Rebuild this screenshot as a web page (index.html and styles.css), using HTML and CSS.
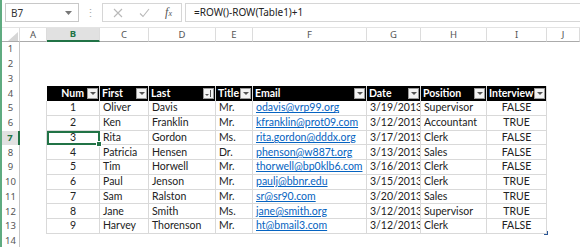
FILE: index.html
```html
<!DOCTYPE html>
<html lang="en">
<head>
    <meta charset="UTF-8">
    <title>Table1 - Excel</title>
    <link rel="stylesheet" href="styles.css">
</head>
<body>
<div class="window">
    <div class="formula-bar">
        <div class="name-box">
            <span>B7</span>
            <svg class="nb-arrow" width="7" height="4" viewBox="0 0 7 4"><polygon points="0,0 7,0 3.5,4" fill="#777"/></svg>
        </div>
        <div class="grip">&#8942;</div>
        <div class="fx-buttons">
            <svg width="10" height="10" viewBox="0 0 10 10"><path d="M1 1 L9 9 M9 1 L1 9" stroke="#b9b9b9" stroke-width="1.1"/></svg>
            <svg width="11" height="10" viewBox="0 0 11 10"><path d="M1 5.5 L4 8.5 L10 1" stroke="#b9b9b9" stroke-width="1.1" fill="none"/></svg>
            <span class="fx">f<small>x</small></span>
        </div>
        <div class="formula">=ROW()-ROW(Table1)+1</div>
    </div>

    <table class="sheet">
        <colgroup>
            <col style="width:18px"><col style="width:27px"><col style="width:53px"><col style="width:49px">
            <col style="width:67px"><col style="width:37px"><col style="width:114px"><col style="width:54px">
            <col style="width:66px"><col style="width:60px"><col style="width:33px">
        </colgroup>
        <thead>
            <tr>
                <th class="corner"><svg width="10" height="9" viewBox="0 0 10 9"><polygon points="10,0 10,9 0,9" fill="#d6d6d6"/></svg></th>
                <th>A</th><th class="sel">B</th><th>C</th><th>D</th><th>E</th><th>F</th><th>G</th><th>H</th><th>I</th><th>J</th>
            </tr>
        </thead>
        <tbody>
            <tr><th>1</th><td colspan="10"></td></tr>
            <tr><th>2</th><td colspan="10"></td></tr>
            <tr><th>3</th><td colspan="10"></td></tr>
            <tr class="hdr">
                <th>4</th><td></td>
                <td class="h"><div class="hd right"><span>Num</span><i class="fb"></i></div></td>
                <td class="h"><div class="hd"><span>First</span><i class="fb"></i></div></td>
                <td class="h"><div class="hd"><span>Last</span><i class="fb sort"></i></div></td>
                <td class="h"><div class="hd"><span>Title</span><i class="fb"></i></div></td>
                <td class="h"><div class="hd"><span>Email</span><i class="fb"></i></div></td>
                <td class="h"><div class="hd"><span>Date</span><i class="fb"></i></div></td>
                <td class="h"><div class="hd"><span>Position</span><i class="fb"></i></div></td>
                <td class="h"><div class="hd"><span>Interview</span><i class="fb"></i></div></td>
                <td></td>
            </tr>
            <tr><th>5</th><td class="edge"></td><td class="t c">1</td><td class="t">Oliver</td><td class="t">Davis</td><td class="t">Mr.</td><td class="t mail">odavis@vrp99.org</td><td class="t r">3/19/2013</td><td class="t">Supervisor</td><td class="t c">FALSE</td><td></td></tr>
            <tr><th>6</th><td class="edge"></td><td class="t c">2</td><td class="t">Ken</td><td class="t">Franklin</td><td class="t">Mr.</td><td class="t mail">kfranklin@prot09.com</td><td class="t r">3/12/2013</td><td class="t">Accountant</td><td class="t c">TRUE</td><td></td></tr>
            <tr><th class="sel">7</th><td class="edge"></td><td class="t c active">3</td><td class="t">Rita</td><td class="t">Gordon</td><td class="t">Ms.</td><td class="t mail">rita.gordon@dddx.org</td><td class="t r">3/17/2013</td><td class="t">Clerk</td><td class="t c">FALSE</td><td></td></tr>
            <tr><th>8</th><td class="edge"></td><td class="t c">4</td><td class="t">Patricia</td><td class="t">Hensen</td><td class="t">Dr.</td><td class="t mail">phenson@w887t.org</td><td class="t r">3/13/2013</td><td class="t">Sales</td><td class="t c">FALSE</td><td></td></tr>
            <tr><th>9</th><td class="edge"></td><td class="t c">5</td><td class="t">Tim</td><td class="t">Horwell</td><td class="t">Mr.</td><td class="t mail">thorwell@bp0klb6.com</td><td class="t r">3/16/2013</td><td class="t">Clerk</td><td class="t c">FALSE</td><td></td></tr>
            <tr><th>10</th><td class="edge"></td><td class="t c">6</td><td class="t">Paul</td><td class="t">Jenson</td><td class="t">Mr.</td><td class="t mail">paulj@bbnr.edu</td><td class="t r">3/15/2013</td><td class="t">Clerk</td><td class="t c">TRUE</td><td></td></tr>
            <tr><th>11</th><td class="edge"></td><td class="t c">7</td><td class="t">Sam</td><td class="t">Ralston</td><td class="t">Mr.</td><td class="t mail">sr@sr90.com</td><td class="t r">3/20/2013</td><td class="t">Sales</td><td class="t c">TRUE</td><td></td></tr>
            <tr><th>12</th><td class="edge"></td><td class="t c">8</td><td class="t">Jane</td><td class="t">Smith</td><td class="t">Ms.</td><td class="t mail">jane@smith.org</td><td class="t r">3/12/2013</td><td class="t">Supervisor</td><td class="t c">TRUE</td><td></td></tr>
            <tr><th>13</th><td class="edge"></td><td class="t c">9</td><td class="t">Harvey</td><td class="t">Thorenson</td><td class="t">Mr.</td><td class="t mail">ht@bmail3.com</td><td class="t r">3/12/2013</td><td class="t">Clerk</td><td class="t c last">FALSE</td><td></td></tr>
            <tr><th>14</th><td colspan="10"></td></tr>
        </tbody>
    </table>
</div>
</body>
</html>
```

FILE: styles.css
```css
body {
    margin: 0;
    font-family: "Lato", "Liberation Sans", sans-serif;
    background: #fff;
    color: #222;
}
.window {
    border-left: 2px solid #5fab80;
    height: 247px;
    overflow: hidden;
}

/* formula bar */
.formula-bar {
    display: flex;
    align-items: flex-start;
    height: 28px;
    padding-top: 3px;
    box-sizing: border-box;
    border-bottom: 1px solid #e3e3e3;
}
.name-box {
    display: flex;
    align-items: center;
    justify-content: space-between;
    width: 74px;
    height: 19px;
    margin-left: 3px;
    padding: 0 6px 0 5px;
    box-sizing: border-box;
    border: 1px solid #c8c8c8;
    font-family: "Noto Sans", sans-serif;
    font-size: 10px;
    color: #333;
}
.grip {
    width: 23px;
    text-align: center;
    color: #aaa;
    font-size: 11px;
    line-height: 19px;
}
.fx-buttons {
    display: flex;
    align-items: center;
    justify-content: space-between;
    width: 80px;
    height: 19px;
    padding: 0 9px 0 10px;
    box-sizing: border-box;
    border: 1px solid #d6d6d6;
}
.fx {
    font-family: "Liberation Serif", serif;
    font-style: italic;
    font-size: 12px;
    color: #555;
}
.fx small {
    font-size: 8px;
}
.formula {
    flex: 1;
    height: 19px;
    margin-left: 3px;
    margin-right: -1px;
    padding-left: 8px;
    box-sizing: border-box;
    border: 1px solid #d6d6d6;
    font-family: "Noto Sans", sans-serif;
    font-size: 10px;
    line-height: 17px;
    color: #222;
}

/* grid */
.sheet {
    table-layout: fixed;
    width: 578px;
    border-collapse: separate;
    border-spacing: 0;
}
.sheet th, .sheet td {
    padding: 0;
    overflow: hidden;
    white-space: nowrap;
}
.sheet thead tr {
    height: 14px;
}
.sheet thead th {
    font-family: "Noto Sans", sans-serif;
    font-weight: normal;
    font-size: 9.5px;
    color: #555;
    border-right: 1px solid #dcdcdc;
    border-bottom: 1px solid #ababab;
    line-height: 12px;
}
.sheet thead th.corner {
    text-align: right;
    vertical-align: bottom;
    padding-right: 1px;
    line-height: 0;
}
.sheet thead th.sel {
    background: #e1e1e1;
    color: #217346;
    font-weight: bold;
    border-bottom: 2px solid #217346;
}
.sheet tbody tr {
    height: 14.75px;
}
.sheet tbody th {
    font-family: "Noto Sans", sans-serif;
    font-weight: normal;
    font-size: 9.5px;
    color: #555;
    border-right: 1px solid #c6c6c6;
    line-height: 12px;
}
.sheet tbody th.sel {
    background: #e1e1e1;
    color: #217346;
    font-weight: bold;
    border-right: 2px solid #217346;
}

/* table cells */
.sheet td {
    font-size: 10.5px;
    line-height: 13px;
}
.t {
    padding: 0 3px !important;
    border-right: 1px solid #d9d9d9;
    border-bottom: 1px solid #d9d9d9;
}
.t.r {
    padding-right: 2px !important;
}
.edge {
    border-right: 1px solid #d9d9d9;
}
.c {
    text-align: center;
}
.r {
    text-align: right;
}
.mail {
    color: #0563c1;
    text-decoration: underline;
}
.h {
    background: #000;
    color: #fff;
    font-weight: bold;
    border-right: 1px solid #d9d9d9;
}
.hd {
    display: flex;
    align-items: center;
    justify-content: space-between;
    padding: 0 1px 0 2px;
}
.hd.right {
    justify-content: flex-end;
    gap: 3px;
}
.fb {
    position: relative;
    width: 11px;
    height: 11px;
    box-sizing: border-box;
    background: #f3f3f3;
    border: 1px solid #9a9a9a;
    flex: none;
}
.fb::after {
    content: "";
    position: absolute;
    left: 2px;
    top: 3px;
    border-left: 3px solid transparent;
    border-right: 3px solid transparent;
    border-top: 3px solid #555;
}
.fb.sort::after {
    left: 1px;
    top: 5px;
    border-left-width: 2px;
    border-right-width: 2px;
    border-top-width: 2px;
}
.fb.sort::before {
    content: "";
    position: absolute;
    right: 2px;
    top: 1px;
    width: 1px;
    height: 7px;
    background: #555;
}
.active {
    position: relative;
    outline: 2px solid #217346;
    outline-offset: -2px;
    overflow: visible !important;
}
.active::after {
    content: "";
    position: absolute;
    right: -3px;
    bottom: -3px;
    width: 4px;
    height: 4px;
    background: #217346;
    border: 1px solid #fff;
}
.last {
    position: relative;
    overflow: visible !important;
}
.last::after {
    content: "";
    position: absolute;
    right: -2px;
    bottom: -2px;
    width: 3px;
    height: 3px;
    border-right: 1px solid #2b5797;
    border-bottom: 1px solid #2b5797;
}
```
